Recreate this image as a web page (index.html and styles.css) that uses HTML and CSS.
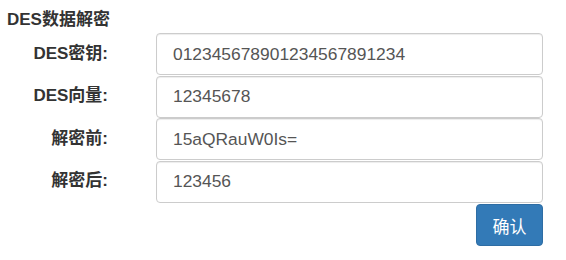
FILE: index.html
```html
<!DOCTYPE html>
<html lang="zh-CN">
<head>
    <meta charset="UTF-8">
    <title>DES数据解密</title>
    <link rel="stylesheet" href="styles.css">
</head>
<body>
    <div class="panel">
        <h4 class="title">DES数据解密</h4>
        <form class="form-horizontal" onsubmit="return false">
            <label for="key" class="control-label">DES密钥:</label>
            <input type="text" id="key" class="form-control" value="012345678901234567891234">

            <label for="iv" class="control-label">DES向量:</label>
            <input type="text" id="iv" class="form-control" value="12345678">

            <label for="cipher" class="control-label">解密前:</label>
            <input type="text" id="cipher" class="form-control" value="15aQRauW0Is=">

            <label for="plain" class="control-label">解密后:</label>
            <input type="text" id="plain" class="form-control" value="123456">

            <button type="submit" class="btn btn-primary">确认</button>
        </form>
    </div>
</body>
</html>
```

FILE: styles.css
```css
* {
    margin: 0;
    padding: 0;
    box-sizing: border-box;
}

body {
    font-family: "Liberation Sans", "Noto Sans CJK SC", Arial, sans-serif;
    font-size: 17px;
    line-height: 1.42857;
    color: #333;
    background: #fff;
    padding: 8px 0 0 7px;
}

.title {
    font-size: 17px;
    font-weight: bold;
    line-height: 24px;
    margin-bottom: 1px;
}

.form-horizontal {
    display: grid;
    grid-template-columns: 101px 387px;
    column-gap: 48px;
    row-gap: 0.5px;
    align-items: center;
}

.control-label {
    font-weight: bold;
    text-align: right;
}

.form-control {
    height: 42px;
    width: 100%;
    padding: 0 16px;
    font-family: inherit;
    font-size: 17.4px;
    color: #555;
    background: #fff;
    border: 1px solid #ccc;
    border-radius: 4px;
    box-shadow: inset 0 1px 1px rgba(0, 0, 0, 0.075);
    outline: none;
}

.btn {
    grid-column: 2;
    justify-self: end;
    width: 67px;
    height: 42px;
    margin-top: 1px;
    font-family: inherit;
    font-size: 17px;
    color: #fff;
    border-radius: 4px;
    cursor: pointer;
}

.btn-primary {
    background-color: #337ab7;
    border: 1px solid #2e6da4;
}
```
